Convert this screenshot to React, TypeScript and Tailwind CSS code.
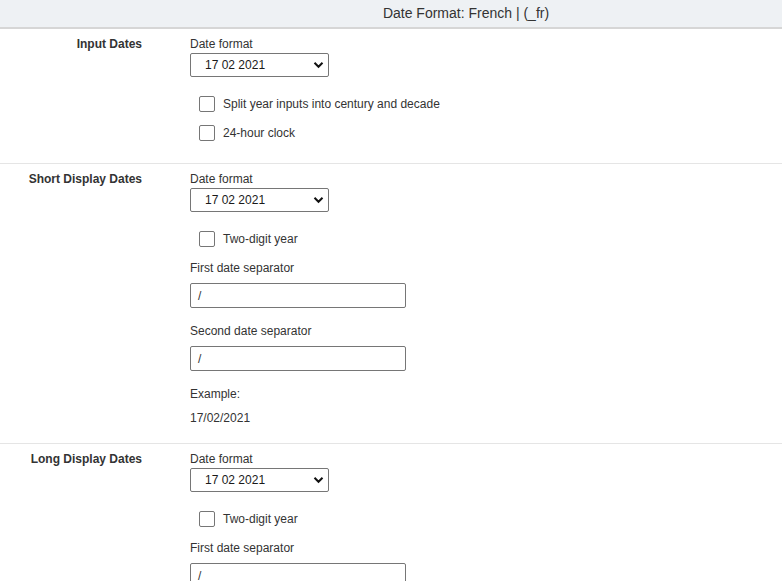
import React from "react";

const Sel = () => (
  <div className="mt-[2px] w-[139px] h-[24px] border border-[#767676] rounded-[2px] bg-white flex items-center justify-between pl-[14px] pr-[4px] text-[12px] text-[#1a1a1a]">
    <span>17 02 2021</span>
    <svg width="11" height="8" viewBox="0 0 11 8"><path d="M1.5 1.8 L5.5 5.8 L9.5 1.8" stroke="#111" strokeWidth="2" fill="none" /></svg>
  </div>
);
const Check = ({ label, mt }: { label: string; mt: string }) => (
  <div className={`flex items-center h-[22px] pl-[9px] ${mt}`}>
    <div className="w-[16px] h-[16px] border border-[#767676] rounded-[2px] bg-white" />
    <span className="ml-[8px] text-[12px] text-[#333]">{label}</span>
  </div>
);
const Txt = ({ children, mt }: { children: React.ReactNode; mt: string }) => (
  <div className={`h-[14px] leading-[14px] text-[12px] text-[#333] ${mt}`}>{children}</div>
);
const Inp = ({ mt }: { mt: string }) => (
  <div className={`w-[216px] h-[25px] border border-[#767676] rounded-[2px] bg-white flex items-center pl-[7px] text-[12px] text-[#333] ${mt}`}>/</div>
);
const Section = ({ title, children, last }: { title: string; children: React.ReactNode; last?: boolean }) => (
  <div className={`flex pt-[8px] ${last ? "" : "border-b border-[#e5e5e5]"}`}>
    <div className="w-[142px] text-right text-[12px] font-bold text-[#333] leading-[14px]">{title}</div>
    <div className="ml-[48px] flex flex-col">{children}</div>
  </div>
);
const Short = ({ last }: { last?: boolean }) => (
  <>
    <Txt mt="">Date format</Txt>
    <Sel />
    <Check label="Two-digit year" mt="mt-[16px]" />
    <Txt mt="mt-[11px]">First date separator</Txt>
    <Inp mt="mt-[8px]" />
    {!last && (
      <>
        <Txt mt="mt-[16px]">Second date separator</Txt>
        <Inp mt="mt-[8px]" />
        <Txt mt="mt-[16px]">Example:</Txt>
        <Txt mt="mt-[10px]">17/02/2021</Txt>
        <div className="h-[18px]" />
      </>
    )}
  </>
);

export default function App() {
  return (
    <div className="w-[782px] h-[581px] overflow-hidden bg-white" style={{ fontFamily: '"Liberation Sans", Arial, sans-serif' }}>
      <div className="h-[29px] bg-[#eef1f4] border-b-2 border-[#d6d6d6] flex items-center justify-center pl-[150px] text-[14px] text-[#333]">
        Date Format: French | (_fr)
      </div>
      <Section title="Input Dates">
        <Txt mt="">Date format</Txt>
        <Sel />
        <Check label="Split year inputs into century and decade" mt="mt-[16px]" />
        <Check label="24-hour clock" mt="mt-[7px]" />
        <div className="h-[19px]" />
      </Section>
      <Section title="Short Display Dates"><Short /></Section>
      <Section title="Long Display Dates" last><Short last /></Section>
    </div>
  );
}
